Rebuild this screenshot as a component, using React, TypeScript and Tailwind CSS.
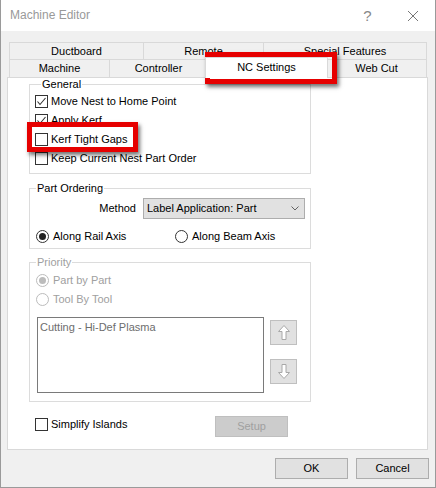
import React from "react";

const font = { fontFamily: '"Liberation Sans", Arial, sans-serif' };

const CheckBox = ({ checked, label }: { checked?: boolean; label: string }) => (
  <div className="flex h-[19px] items-center gap-[3px]">
    <div className="flex h-[13px] w-[13px] items-center justify-center border border-[#333] bg-white">
      {checked && (
        <svg width="11" height="11" viewBox="0 0 11 11">
          <polyline points="1.5,5.5 4,8.5 9.5,2" fill="none" stroke="#333" strokeWidth="1.1" />
        </svg>
      )}
    </div>
    <span>{label}</span>
  </div>
);

const Radio = ({ checked, label, disabled }: { checked?: boolean; label: string; disabled?: boolean }) => (
  <div className={`flex h-[19px] items-center gap-[4px] ${disabled ? "text-[#a0a0a0]" : ""}`}>
    <div
      className={`flex h-[13px] w-[13px] items-center justify-center rounded-full border bg-white ${
        disabled ? "border-[#bcbcbc]" : "border-[#333]"
      }`}
    >
      {checked && <div className={`h-[7px] w-[7px] rounded-full ${disabled ? "bg-[#bcbcbc]" : "bg-[#222]"}`} />}
    </div>
    <span>{label}</span>
  </div>
);

const Arrow = ({ down }: { down?: boolean }) => (
  <svg width="12" height="15" viewBox="0 0 12 15" className={down ? "rotate-180" : ""}>
    <polygon points="6,0.5 11.5,6.5 8,6.5 8,14.5 4,14.5 4,6.5 0.5,6.5" fill="white" stroke="#a8a8a8" strokeWidth="1" />
  </svg>
);

const Tab = ({ label, w, last }: { label: string; w: string; last?: boolean }) => (
  <div
    className={`flex h-full items-center justify-center border-l border-t border-[#d9d9d9] bg-[#f0f0f0] ${w} ${
      last ? "border-r" : ""
    }`}
  >
    {label}
  </div>
);

export default function App() {
  return (
    <div
      className="relative flex h-[488px] w-[436px] flex-col overflow-hidden border border-t-0 border-[#9a9a9a] text-[11px] leading-[13px] text-black"
      style={font}
    >
      {/* title bar */}
      <div className="flex h-[31px] items-center bg-white">
        <span className="pl-[9px] text-[12px] text-[#999]">Machine Editor</span>
        <span className="ml-auto flex w-[45px] justify-center text-[15px] text-[#888]">?</span>
        <div className="flex w-[45px] justify-center">
          <svg width="10" height="10" viewBox="0 0 10 10">
            <path d="M0 0L10 10M10 0L0 10" stroke="#777" strokeWidth="1" />
          </svg>
        </div>
      </div>

      {/* body */}
      <div className="flex flex-1 flex-col bg-[#f0f0f0] pl-[6px] pt-[11px]">
        <div className="w-[421px]">
          <div className="ml-[2px] flex h-[17px] w-[418px]">
            <Tab label="Ductboard" w="w-[134px]" />
            <Tab label="Remote" w="w-[120px]" />
            <Tab label="Special Features" w="w-[164px]" last />
          </div>
          <div className="ml-[2px] flex h-[18px] w-[418px] items-start">
            <Tab label="Machine" w="w-[100px]" />
            <Tab label="Controller" w="w-[98px]" />
            <div className="relative z-10 -mx-[2px] -mt-[2px] flex h-[21px] w-[123px] items-center justify-center border-x border-t border-[#d9d9d9] bg-white pb-[2px]">
              NC Settings
            </div>
            <Tab label="Web Cut" w="flex-1" last />
          </div>

          {/* tab page */}
          <div className="flex h-[373px] flex-col border border-[#d9d9d9] bg-white pl-[21px]">
            <fieldset className="w-[282px] border border-[#dcdcdc] pb-[5px] pl-[5px]">
              <legend className="ml-[6px] px-[1px]">General</legend>
              <div className="pt-[1px]">
                <CheckBox checked label="Move Nest to Home Point" />
                <CheckBox checked label="Apply Kerf" />
                <CheckBox label="Kerf Tight Gaps" />
                <CheckBox label="Keep Current Nest Part Order" />
              </div>
            </fieldset>

            <fieldset className="mt-[8px] w-[282px] border border-[#dcdcdc] pb-[2px]">
              <legend className="ml-[6px] px-[1px]">Part Ordering</legend>
              <div className="mt-[3px] flex items-center justify-end gap-[7px] pr-[5px]">
                <span>Method</span>
                <div className="flex h-[21px] w-[162px] items-center justify-between border border-[#adadad] bg-[#e1e1e1] pl-[3px] pr-[5px]">
                  <span>Label Application: Part</span>
                  <svg width="8" height="5" viewBox="0 0 8 5">
                    <polyline points="0.5,0.5 4,4 7.5,0.5" fill="none" stroke="#555" strokeWidth="0.9" />
                  </svg>
                </div>
              </div>
              <div className="mt-[8px] flex pl-[6px]">
                <div className="w-[139px]">
                  <Radio checked label="Along Rail Axis" />
                </div>
                <Radio label="Along Beam Axis" />
              </div>
            </fieldset>

            <fieldset className="mt-[7px] w-[282px] border border-[#dcdcdc] pb-[8px] pl-[6px] text-[#a0a0a0]">
              <legend className="px-[1px]">Priority</legend>
              <div className="mt-[2px]">
                <Radio disabled checked label="Part by Part" />
                <Radio disabled label="Tool By Tool" />
              </div>
              <div className="mt-[8px] flex items-start pl-[1px]">
                <div className="h-[76px] w-[227px] border border-[#7a7a7a] bg-white px-[2px] pt-[3px] text-[#6d6d6d]">
                  Cutting - Hi-Def Plasma
                </div>
                <div className="ml-[6px] mt-[3px] flex flex-col gap-[14px]">
                  <div className="flex h-[25px] w-[27px] items-center justify-center border border-[#bfbfbf] bg-[#e1e1e1]">
                    <Arrow />
                  </div>
                  <div className="flex h-[25px] w-[27px] items-center justify-center border border-[#bfbfbf] bg-[#e1e1e1]">
                    <Arrow down />
                  </div>
                </div>
              </div>
            </fieldset>

            <div className="mt-[14px] flex items-start pl-[6px]">
              <div className="mt-[1px] w-[180px]">
                <div className="flex h-[15px] items-center gap-[3px]">
                  <div className="h-[13px] w-[13px] border border-[#333] bg-white" />
                  <span>Simplify Islands</span>
                </div>
              </div>
              <div className="flex h-[21px] w-[73px] items-center justify-center border border-[#bfbfbf] bg-[#cccccc] text-[#a0a0a0]">
                Setup
              </div>
            </div>
          </div>
        </div>

        {/* footer buttons */}
        <div className="mt-[8px] flex w-[422px] justify-end gap-[8px]">
          <div className="flex h-[21px] w-[73px] items-center justify-center border border-[#adadad] bg-[#e1e1e1]">OK</div>
          <div className="flex h-[21px] w-[73px] items-center justify-center border border-[#adadad] bg-[#e1e1e1]">Cancel</div>
        </div>
      </div>

      {/* red callouts */}
      <div className="absolute left-[204px] top-[52px] h-[32px] w-[132px] border-[5px] border-[#e60000] shadow-[2px_3px_4px_rgba(0,0,0,0.55)]" />
      <div className="absolute left-[26px] top-[122px] h-[30px] w-[111px] border-[5px] border-[#e60000] shadow-[2px_3px_4px_rgba(0,0,0,0.55)]" />
    </div>
  );
}
